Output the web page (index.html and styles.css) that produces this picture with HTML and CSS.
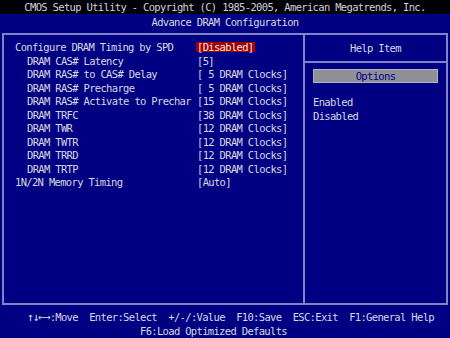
FILE: index.html
```html
<!DOCTYPE html>
<html>
<head>
<meta charset="utf-8">
<link rel="stylesheet" href="styles.css">
</head>
<body>
<div class="screen">
  <div class="topbar">CMOS Setup Utility - Copyright (C) 1985-2005, American Megatrends, Inc.</div>
  <div class="subtitle">Advance DRAM Configuration</div>
  <div class="main">
    <div class="left">
      <div class="row"><span class="label">Configure DRAM Timing by SPD</span><span class="value"><span class="sel">[Disabled]</span></span></div>
      <div class="row"><span class="label sub">DRAM CAS# Latency</span><span class="value">[5]</span></div>
      <div class="row"><span class="label sub">DRAM RAS# to CAS# Delay</span><span class="value">[ 5 DRAM Clocks]</span></div>
      <div class="row"><span class="label sub">DRAM RAS# Precharge</span><span class="value">[ 5 DRAM Clocks]</span></div>
      <div class="row"><span class="label sub">DRAM RAS# Activate to Prechar</span><span class="value">[15 DRAM Clocks]</span></div>
      <div class="row"><span class="label sub">DRAM TRFC</span><span class="value">[38 DRAM Clocks]</span></div>
      <div class="row"><span class="label sub">DRAM TWR</span><span class="value">[12 DRAM Clocks]</span></div>
      <div class="row"><span class="label sub">DRAM TWTR</span><span class="value">[12 DRAM Clocks]</span></div>
      <div class="row"><span class="label sub">DRAM TRRD</span><span class="value">[12 DRAM Clocks]</span></div>
      <div class="row"><span class="label sub">DRAM TRTP</span><span class="value">[12 DRAM Clocks]</span></div>
      <div class="row"><span class="label">1N/2N Memory Timing</span><span class="value">[Auto]</span></div>
    </div>
    <div class="right">
      <div class="help-head">Help Item</div>
      <div class="options">Options</div>
      <div class="opt-list">
        <div class="opt">Enabled</div>
        <div class="opt">Disabled</div>
      </div>
    </div>
  </div>
  <div class="footer">
    <div class="f1"><span class="arrows">↑↓←→</span>:Move  Enter:Select  +/-/:Value  F10:Save  ESC:Exit  F1:General Help</div>
    <div class="f2">F6:Load Optimized Defaults</div>
  </div>
</div>
</body>
</html>
```

FILE: styles.css
```css
html, body {
  margin: 0;
  padding: 0;
  background: #000082;
}
.screen {
  width: 450px;
  height: 338px;
  overflow: hidden;
  background: #000082;
  font-family: "DejaVu Sans Mono", "Liberation Mono", monospace;
  font-size: 10.5px;
  letter-spacing: -0.67px;
  color: #d8d8e0;
}
.topbar, .subtitle, .label, .value, .help-head, .options, .opt, .f1, .f2 {
  white-space: pre;
}
.topbar {
  height: 14px;
  line-height: 14px;
  background: #000008;
  color: #d0d0d8;
  text-align: center;
}
.subtitle {
  height: 19px;
  line-height: 16px;
  text-align: center;
}
.main {
  box-sizing: border-box;
  margin-left: 2px;
  width: 446px;
  height: 272px;
  border: 2px solid #8282c4;
  display: flex;
}
.left {
  width: 301px;
  border-right: 2px solid #8282c4;
  padding: 6px 0 0 11px;
  box-sizing: border-box;
}
.row {
  display: grid;
  grid-template-columns: 182px 1fr;
  height: 13.55px;
  line-height: 13.55px;
}
.label.sub {
  padding-left: 12px;
}
.sel {
  display: inline-block;
  background: #a40000;
  color: #f0e8e8;
  line-height: 10px;
  margin-left: -1px;
  padding: 0 1px;
}
.right {
  flex: 1;
  display: flex;
  flex-direction: column;
}
.help-head {
  height: 26px;
  line-height: 26px;
  text-align: center;
  border-bottom: 2px solid #8282c4;
}
.options {
  box-sizing: border-box;
  margin: 6px 0 0 8px;
  width: 125px;
  height: 14px;
  line-height: 12px;
  background: #909098;
  border: 1px solid #b4b4bc;
  color: #000082;
  text-align: center;
}
.opt-list {
  margin: 12px 0 0 8px;
  line-height: 14px;
}
.footer {
  padding: 5px 0 0 27px;
  line-height: 14px;
}
.arrows {
  font-size: 11.5px;
  letter-spacing: -1.27px;
}
.f2 {
  padding-left: 113px;
}
```
